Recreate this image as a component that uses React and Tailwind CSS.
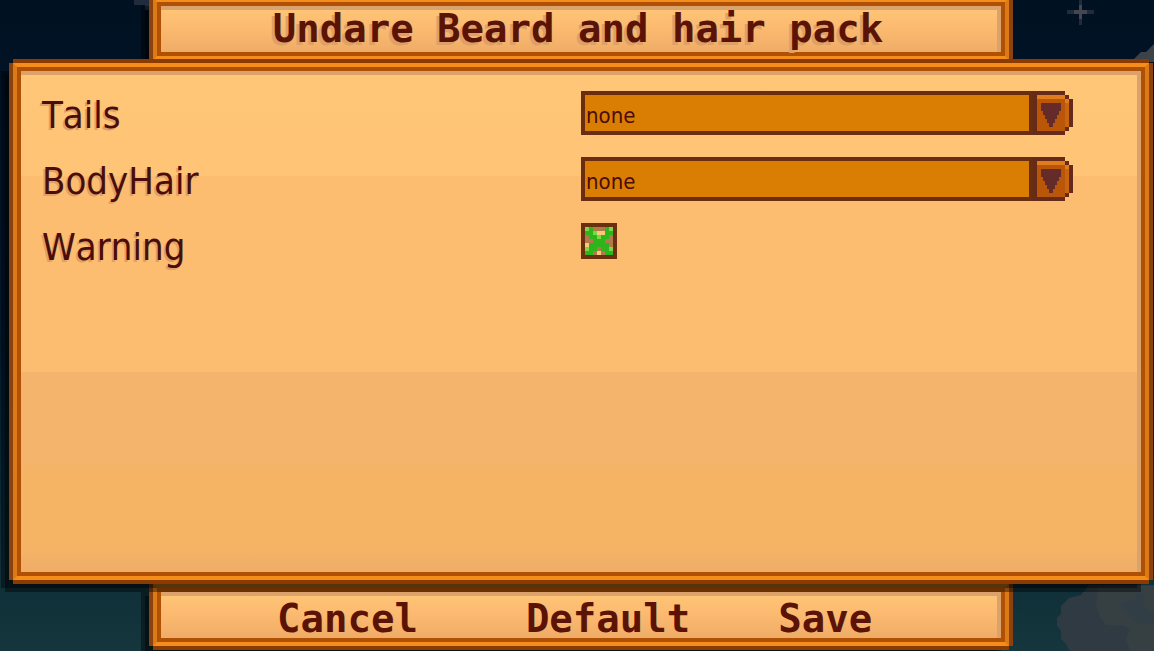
import { useState } from "react";

const options = ["none", "short", "long"];

const dropdowns = [
  { id: "tails", label: "Tails" },
  { id: "body-hair", label: "BodyHair" },
];

// 7x7 sprite: g = green, l = light green, t = tan, b = brown
const checkSprite = [
  "lgbbbgl",
  "gglttgg",
  "bgglggb",
  "bbgggbb",
  "tgggggb",
  "lggbggl",
  "ggbtbgg",
];

const spriteColors = {
  g: "#2fb51c",
  l: "#7ad943",
  t: "#f5cb78",
  b: "#b27a4c",
};

function Frame({ className = "", innerClassName = "", children }) {
  return (
    <div className={`flex flex-col p-1 ${className}`}>
      <div className="flex flex-1 flex-col border-4 border-x-[#dc7a15] border-y-[#f58d1b] shadow-[4px_0_#8a4210,-4px_0_#8a4210,0_4px_#8b3a00,0_-4px_#8b3a00,-12px_8px_rgba(0,0,0,0.4),-8px_12px_rgba(0,0,0,0.4)]">
        <div
          className={`flex-1 border-4 border-[#b05005] shadow-[inset_-4px_4px_#dca26b] ${innerClassName}`}
        >
          {children}
        </div>
      </div>
    </div>
  );
}

function OptionLabel({ htmlFor, children }) {
  return (
    <label
      htmlFor={htmlFor}
      className="h-11 pl-[21px] text-[38px] leading-[48px] [font-kerning:none] [text-shadow:-2px_2px_#dda068]"
    >
      {children}
    </label>
  );
}

function Dropdown({ id }) {
  const [value, setValue] = useState("none");

  return (
    <div className="flex h-11 pr-[68px]">
      <select
        id={id}
        value={value}
        onChange={(e) => setValue(e.target.value)}
        className="min-w-0 flex-1 appearance-none border-4 border-[#6b2d10] bg-[#da7e03] pt-1 pl-px text-[22px] outline-none"
      >
        {options.map((option) => (
          <option key={option}>{option}</option>
        ))}
      </select>
      <svg
        viewBox="0 0 10 11"
        className="h-11 w-10"
        shapeRendering="crispEdges"
        aria-hidden="true"
      >
        <path d="M0 0h8v1h1v1h1v7h-1v1h-1v1h-8z" fill="#652b18" />
        <path d="M1 1h7v1h1v7h-1v1h-7z" fill="#b95608" />
        <path d="M1 1h7v1h-7zM8 2h1v1h-1z" fill="#e07c1b" />
        <path d="M8 3h1v6h-1z" fill="#c96410" />
        <path
          d="M2 3h5v2h-.5v1h-.5v1h-.5v1h-.5v1h-1v-1h-.5v-1h-.5v-1h-.5v-1h-.5z"
          fill="#652b28"
        />
      </svg>
    </div>
  );
}

function Sky() {
  return (
    <svg
      className="absolute inset-0 h-full w-full"
      viewBox="0 0 1154 651"
      preserveAspectRatio="none"
      aria-hidden="true"
    >
      <path d="M1079 0h3v10h12v4h-12v11h-3v-11h-12v-4h12z" fill="#222b3d" />
      <path d="M1079 5h3v5h5v4h-5v5h-3v-5h-5v-4h5z" fill="#45464f" />
      <path d="M1133 60l8-8h5l8-8v18h-21z" fill="#3d4249" />
      <path d="M134 0h16v10h-5v-5h-11z" fill="#222b3d" />
      <path
        d="M1057 626v-8l4-4v-8l8-8 12-3 8-10h65v66h-84l-5-8-4-4v-8z"
        fill="#2f3a42"
      />
      <path
        d="M1098 586h56v65h-24l-4-12 4-10-8-4h-16l-6-8-4-12z"
        fill="#363f42"
      />
      <path
        d="M1120 604l8-4h8v-6h8v14l10 6v10h-14l-12-8z"
        fill="#323e45"
      />
    </svg>
  );
}

export default function App() {
  const [warning, setWarning] = useState(true);

  return (
    <div className="relative flex min-h-screen flex-col overflow-hidden bg-linear-to-b from-[#001122] via-[#02182b] to-[#15363d] pr-px pb-px pl-[9px] font-['DejaVu_Sans_Condensed','DejaVu_Sans',sans-serif] text-[#4a0d0a]">
      <Sky />

      {/* Title */}
      <Frame
        className="relative mx-35 -mt-1.5 h-[70px]"
        innerClassName="flex items-center justify-center bg-linear-to-b from-[#ffc677] via-[#fbb970] to-[#eeac67] pr-1.5"
      >
        <h1 className="font-['DejaVu_Sans_Mono',monospace] text-[39px] leading-[46px] font-bold whitespace-nowrap text-[#5b1305] [text-shadow:-3px_3px_#dca068]">
          Undare Beard and hair pack
        </h1>
      </Frame>

      {/* Options */}
      <Frame
        className="relative z-10 -mt-[5px] flex-1"
        innerClassName="bg-[linear-gradient(#ffc678_0%,#ffc475_21%,#fcbd70_21%,#fcbd70_60%,#f4b46d_60%,#f4b46b_78%,#f4b464_80%,#f5b465_95%,#eeac67_100%)]"
      >
        <div className="grid grid-cols-2 gap-y-[22px] pt-5">
          {dropdowns.map((item) => (
            <div key={item.id} className="contents">
              <OptionLabel htmlFor={item.id}>{item.label}</OptionLabel>
              <Dropdown id={item.id} />
            </div>
          ))}
          <OptionLabel htmlFor="warning">Warning</OptionLabel>
          <div className="relative h-9 w-9">
            <input
              id="warning"
              type="checkbox"
              checked={warning}
              onChange={(e) => setWarning(e.target.checked)}
              className="block h-9 w-9 appearance-none border-4 border-[#6b3010] bg-[#ffcb80]"
            />
            {warning && (
              <svg
                viewBox="0 0 7 7"
                className="pointer-events-none absolute inset-1 h-7 w-7"
                shapeRendering="crispEdges"
                aria-hidden="true"
              >
                {checkSprite.map((row, y) =>
                  row.split("").map((c, x) => (
                    <rect
                      key={`${x}-${y}`}
                      x={x}
                      y={y}
                      width="1"
                      height="1"
                      fill={spriteColors[c]}
                    />
                  )),
                )}
              </svg>
            )}
          </div>
        </div>
      </Frame>

      {/* Actions */}
      <Frame
        className="relative mx-35 -mt-1 h-[70px]"
        innerClassName="flex items-center bg-linear-to-b from-[#ffc677] via-[#fbb970] to-[#eeac67] pt-2 pl-[116px] font-['DejaVu_Sans_Mono',monospace] text-[39px] leading-[38px] font-bold text-[#5b1305] [text-shadow:-3px_3px_#dca068]"
      >
        <button type="button" className="mr-[108px] cursor-pointer">
          Cancel
        </button>
        <button type="button" className="mr-[88px] cursor-pointer">
          Default
        </button>
        <button type="button" className="cursor-pointer">
          Save
        </button>
      </Frame>
    </div>
  );
}
